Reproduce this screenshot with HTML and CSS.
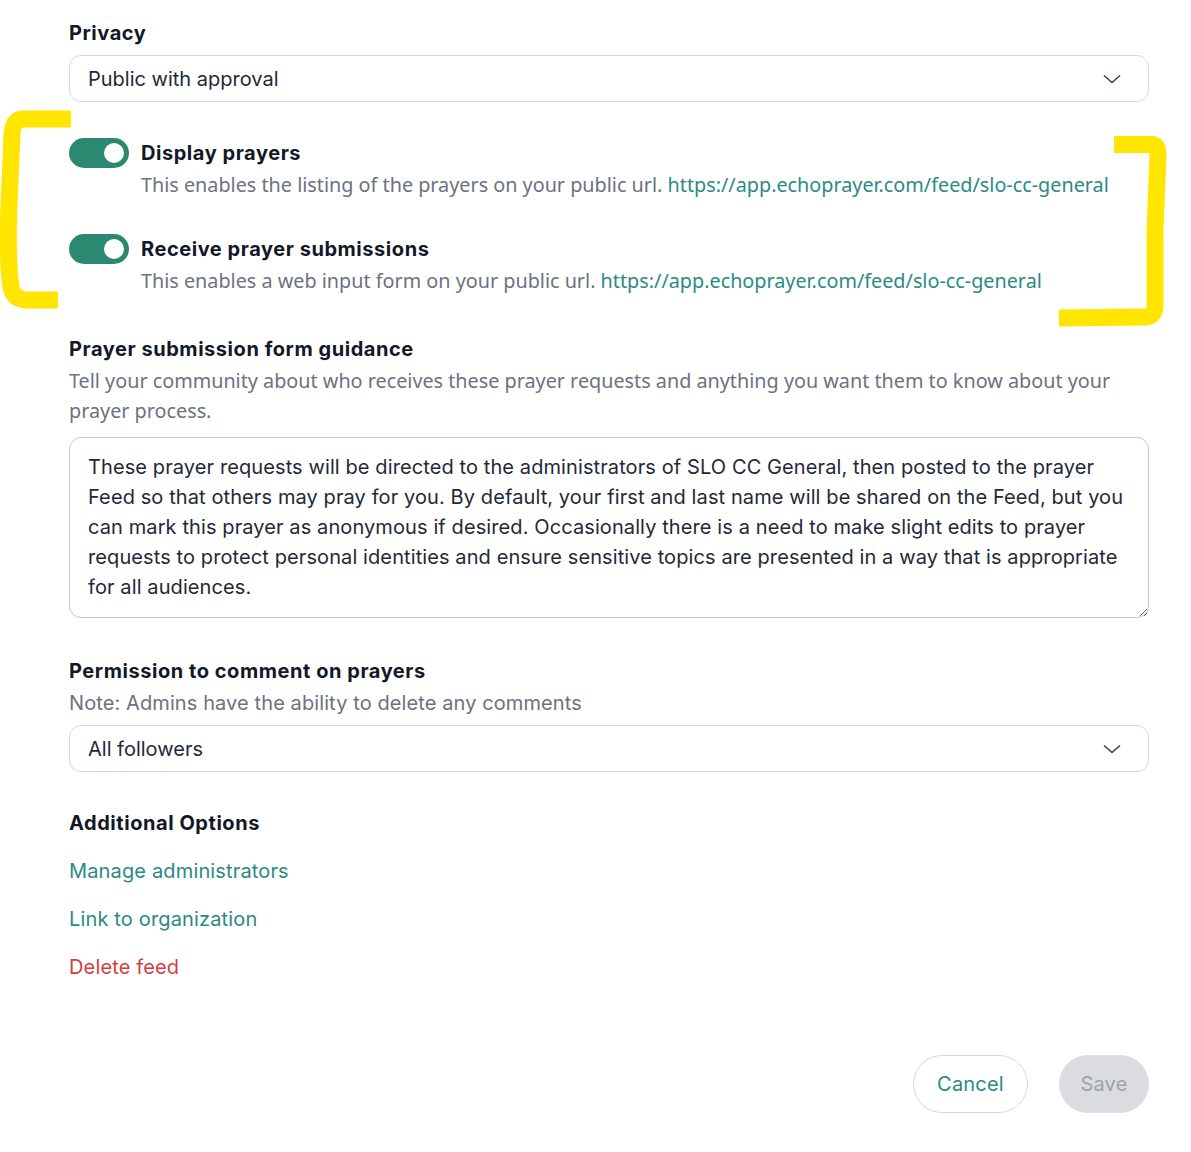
FILE: index.html
```html
<!DOCTYPE html>
<html lang="en">
<head>
    <meta charset="UTF-8">
    <meta name="viewport" content="width=device-width, initial-scale=1.0">
    <title>Feed settings | Echo Prayer</title>
    <link rel="stylesheet" href="styles.css">
</head>
<body>
    <div class="page">
        <div class="field">
            <div class="label">Privacy</div>
            <div class="select">
                <span>Public with approval</span>
                <svg class="chev" width="18" height="10" viewBox="0 0 18 10"><path d="M1 1.5l8 7 8-7" fill="none" stroke="#374151" stroke-width="1.6"/></svg>
            </div>
        </div>

        <div class="toggle-row first">
            <span class="toggle on"><span class="knob"></span></span>
            <div>
                <div class="label">Display prayers</div>
                <div class="desc soft">This enables the listing of the prayers on your public url. <a href="#">https://app.echoprayer.com/feed/slo-cc-general</a></div>
            </div>
        </div>

        <div class="toggle-row">
            <span class="toggle on"><span class="knob"></span></span>
            <div>
                <div class="label">Receive prayer submissions</div>
                <div class="desc soft">This enables a web input form on your public url. <a href="#">https://app.echoprayer.com/feed/slo-cc-general</a></div>
            </div>
        </div>

        <div class="field guidance">
            <div class="label">Prayer submission form guidance</div>
            <div class="desc soft">Tell your community about who receives these prayer requests and anything you want them to know about your prayer process.</div>
            <textarea class="textbox" rows="5">These prayer requests will be directed to the administrators of SLO CC General, then posted to the prayer Feed so that others may pray for you. By default, your first and last name will be shared on the Feed, but you can mark this prayer as anonymous if desired. Occasionally there is a need to make slight edits to prayer requests to protect personal identities and ensure sensitive topics are presented in a way that is appropriate for all audiences.</textarea>
        </div>

        <div class="field permission">
            <div class="label">Permission to comment on prayers</div>
            <div class="desc">Note: Admins have the ability to delete any comments</div>
            <div class="select">
                <span>All followers</span>
                <svg class="chev" width="18" height="10" viewBox="0 0 18 10"><path d="M1 1.5l8 7 8-7" fill="none" stroke="#374151" stroke-width="1.6"/></svg>
            </div>
        </div>

        <div class="field options">
            <div class="label">Additional Options</div>
            <a href="#" class="opt">Manage administrators</a>
            <a href="#" class="opt">Link to organization</a>
            <a href="#" class="opt danger">Delete feed</a>
        </div>

        <div class="actions">
            <button class="btn cancel">Cancel</button>
            <button class="btn save" disabled>Save</button>
        </div>
    </div>

    <!-- highlighter marks from the screenshot -->
    <svg class="marks" width="1191" height="340" viewBox="0 0 1191 340">
        <path d="M71 119 L22 119 Q13 120 12 134 L9 205 Q7 262 11 287 Q13 299 26 300 L58 300" fill="none" stroke="#ffe500" stroke-width="17" stroke-linejoin="round"/>
        <path d="M1114 144.5 L1152 144.5 Q1158 145 1158 156 L1155 230 L1155 306 Q1155 317 1144 317 L1059 318" fill="none" stroke="#ffe500" stroke-width="17" stroke-linejoin="round"/>
    </svg>
</body>
</html>
```

FILE: styles.css
```css
body { margin: 0; background: #fff; color: #111827; font-family: Inter, 'Noto Sans', sans-serif; font-size: 20px; line-height: 30px; }
.page { position: relative; width: 1080px; padding: 18px 0 40px 69px; }
.label { font-weight: 700; color: #111827; letter-spacing: 0.55px; }
.desc { color: #6b7280; letter-spacing: 0.1px; }
.desc.soft { font-family: 'Noto Sans', sans-serif; font-size: 19.8px; letter-spacing: 0; }
a { color: #2b8a84; text-decoration: none; }

.field .label + .select { margin-top: 7px; }
.select {
    height: 45px;
    border: 1px solid #d9d9d9;
    border-radius: 12px;
    display: flex;
    align-items: center;
    justify-content: space-between;
    padding: 0 27px 0 18px;
    color: #1f2937;
}
.chev { display: block; }

/* toggles */
.toggle-row { display: flex; gap: 12px; margin-top: 34px; }
.toggle-row.first { margin-top: 36px; }
.toggle-row .desc { margin-top: 2px; }
.toggle {
    flex: none;
    width: 60px;
    height: 30px;
    border-radius: 15px;
    background: #2d8870;
    display: flex;
    align-items: center;
    justify-content: flex-end;
    padding: 0 5px;
    box-sizing: border-box;
}
.knob { width: 20px; height: 20px; border-radius: 50%; background: #fff; }

.guidance { margin-top: 38px; }
.guidance .label { margin-bottom: 2px; }
.textbox {
    display: block;
    width: 100%;
    box-sizing: border-box;
    margin-top: 11px;
    height: 181px;
    padding: 14px 18px;
    border: 1px solid #c8c8c8;
    border-radius: 12px;
    font: inherit;
    line-height: 30px;
    letter-spacing: 0.1px;
    color: #1f2937;
    resize: vertical;
}

.permission { margin-top: 38px; }
.permission .label { margin-bottom: 2px; }
.permission .select { margin-top: 7px; }

.options { margin-top: 36px; display: flex; flex-direction: column; align-items: flex-start; gap: 18px; }
.opt { color: #2b8a84; letter-spacing: 0.15px; }
.opt.danger { color: #d23f3f; }

.actions { display: flex; justify-content: flex-end; gap: 31px; margin-top: 73px; }
.btn {
    height: 58px;
    border-radius: 29px;
    font: inherit;
    letter-spacing: 0.2px;
    padding: 0 22px;
    cursor: pointer;
}
.cancel { background: #fff; border: 1px solid #d9d9d9; color: #2b8a84; padding: 0 23px; }
.save { background: #dadcdf; border: none; color: #9ca3af; padding: 0 21.5px; }

.marks { position: absolute; top: 0; left: 0; pointer-events: none; }
```
